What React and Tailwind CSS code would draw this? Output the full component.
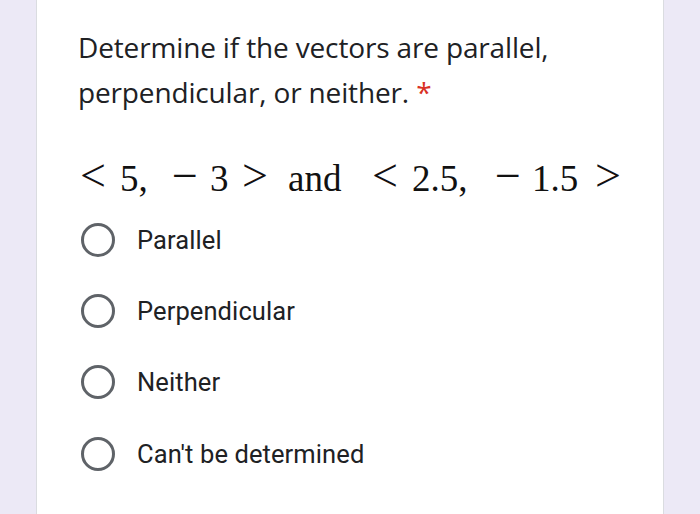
const options = ["Parallel", "Perpendicular", "Neither", "Can't be determined"];

// token, box width (px), big = relation/operator glyph set larger like TeX's
const formula = [
  ["<", 40, true],
  ["5,", 52],
  ["−", 38, true],
  ["3", 32],
  [">", 46, true],
  ["and", 84],
  ["<", 40, true],
  ["2.5,", 83],
  ["−", 37, true],
  ["1.5", 63],
  [">", 30, true],
];

function Radio() {
  return (
    <span className="block h-[34px] w-[34px] shrink-0 rounded-full border-[3.5px] border-[#5f6368]" />
  );
}

export default function App() {
  return (
    <div className="flex h-[514px] w-[700px] justify-center bg-[#ece9f6]">
      <div className="h-full w-[628px] border-x border-[#dadce0] bg-white pl-[44px] pt-[25px] text-[#202124]">
        <h1 className="-ml-[3px] text-[28px] leading-[45px] font-['Open_Sans',sans-serif] tracking-[-0.15px]">
          Determine if the vectors are parallel,
          <br />
          perpendicular, or neither. <span className="text-[#d93025]">*</span>
        </h1>
        <div className="mt-[41px] -ml-[1px] flex h-[40px] items-baseline font-['Liberation_Serif',serif] text-[37px] leading-[40px] text-[#111]">
          {formula.map(([t, w, big], i) => (
            <span
              key={i}
              className={big ? "shrink-0 text-[46px] font-light" : "shrink-0"}
              style={{ width: w }}
            >
              {t}
            </span>
          ))}
        </div>
        <div className="mt-[8px] flex flex-col font-['Roboto',sans-serif] text-[25.5px] tracking-[0.1px]">
          {options.map((o) => (
            <div key={o} className="flex h-[71.33px] items-center gap-[22px]">
              <Radio />
              <span>{o}</span>
            </div>
          ))}
        </div>
      </div>
    </div>
  );
}
